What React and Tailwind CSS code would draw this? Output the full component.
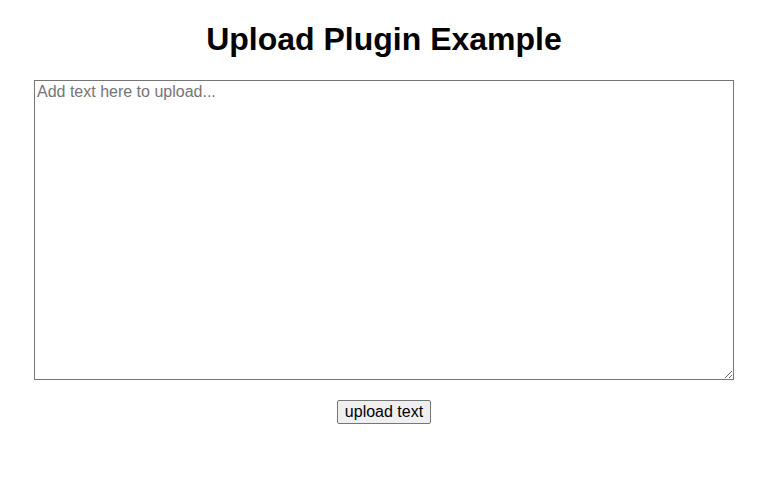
import React, { useState } from 'react';

function App() {
  const [text, setText] = useState('');

  return (
    <div className="min-h-screen bg-white text-black font-['Liberation_Sans',Arial,sans-serif]">
      <div className="flex flex-col items-center">
        <h1 className="mt-[21px] mb-[22px] text-[32px] leading-[37px] font-bold">Upload Plugin Example</h1>
        <textarea
          value={text}
          onChange={(e) => setText(e.target.value)}
          placeholder="Add text here to upload..."
          className="w-[700px] h-[300px] border border-[#767676] px-[2px] py-[2px] text-[16px] leading-[18px] placeholder:text-[#757575] placeholder:opacity-100"
        />
        <button className="mt-[20px] h-[24px] px-[7px] border border-[#767676] rounded-[2px] bg-[#efefef] text-[16px] leading-[18px]">
          upload text
        </button>
      </div>
    </div>
  );
}

export default App;
